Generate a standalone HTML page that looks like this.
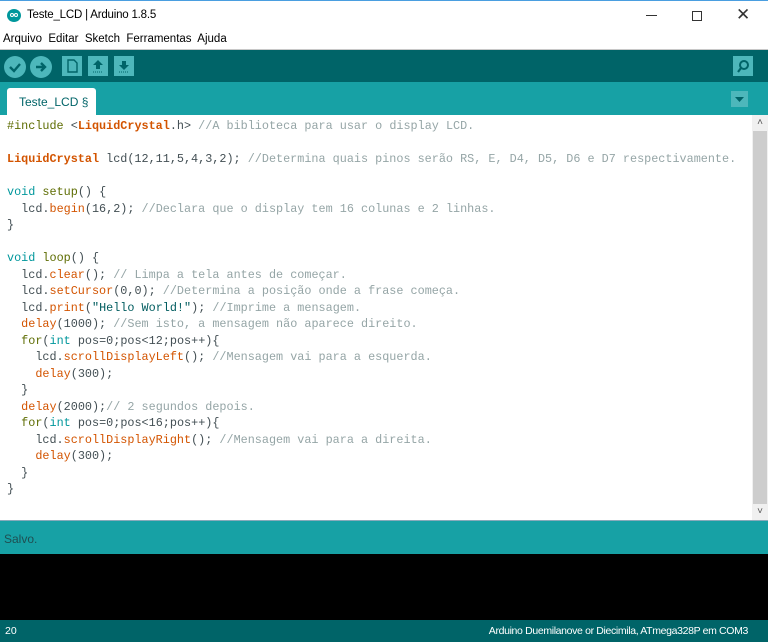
<!DOCTYPE html>
<html><head><meta charset="utf-8"><style>
*{margin:0;padding:0;box-sizing:border-box}
body{width:768px;height:642px;overflow:hidden;background:#fff;font-family:"Liberation Sans",sans-serif;position:relative}
.abs{position:absolute}
#title{top:0;left:0;width:768px;height:30px;background:#fff;border-top:1px solid #4a9ee0}
#menu{top:30px;left:0;width:768px;height:20px;font-size:11.5px;color:#000;border-bottom:1px solid #c8c8c8}
#tool{top:50px;left:0;width:768px;height:32px;background:#006468}
#tabs{top:82px;left:0;width:768px;height:33px;background:#17a1a5}
.btn{position:absolute;top:6px;width:22px;height:22px;border-radius:50%;background:#4db7bb}
.sq{position:absolute;top:6px;width:20px;height:20px;background:#4db7bb}
pre{position:absolute;left:7px;top:118px;font-family:"Liberation Mono",monospace;font-size:11.8px;line-height:16.5px;color:#434f54}
.k{color:#d35400}.kb{color:#d35400;font-weight:bold}.t{color:#00979c}.g{color:#5e6d03}.c{color:#95a5a6}.s{color:#005c5f}
#status{top:520px;left:0;width:768px;height:34px;background:#17a1a5;color:#1f4f52;font-size:12px;border-top:1px solid #8ab}
#console{top:554px;left:0;width:768px;height:66px;background:#000}
#bottom{top:620px;left:0;width:768px;height:22px;background:#006468;color:#fff;font-size:10.5px}
</style></head><body>
<div id="title" class="abs">
 <div class="abs" style="left:7px;top:8px;width:14px;height:13px;border-radius:50%;background:#00979c"></div>
 <div class="abs" style="left:10px;top:12px;width:4px;height:4px;border:1px solid #fff;border-radius:50%"></div>
 <div class="abs" style="left:14px;top:12px;width:4px;height:4px;border:1px solid #fff;border-radius:50%"></div>
 <div class="abs" style="left:27px;top:8px;font-size:11.5px;letter-spacing:-0.2px;color:#000">Teste_LCD | Arduino 1.8.5</div>
 <div class="abs" style="left:646px;top:14px;width:11px;height:1px;background:#333"></div>
 <div class="abs" style="left:692px;top:10px;width:10px;height:10px;border:1px solid #333"></div>
 <div class="abs" style="left:736px;top:4px;font-size:17px;color:#333;font-weight:300">✕</div>
</div>
<div id="menu" class="abs"><span class="abs" style="left:3px;top:3px">Arquivo&nbsp; Editar&nbsp; Sketch&nbsp; Ferramentas&nbsp; Ajuda</span></div>
<div id="tool" class="abs">
 <div class="btn" style="left:4px"><svg width="22" height="22"><path d="M6 11l4 4 6-7" stroke="#006468" stroke-width="2.4" fill="none"/></svg></div>
 <div class="btn" style="left:30px"><svg width="22" height="22"><path d="M6 11h9M11 7l4 4-4 4" stroke="#006468" stroke-width="2.4" fill="none"/></svg></div>
 <div class="sq" style="left:62px"><svg width="20" height="20"><path d="M6 4h6l3 3v9H6z" fill="none" stroke="#006468" stroke-width="1.4"/></svg></div>
 <div class="sq" style="left:88px"><svg width="20" height="20"><path d="M10 4l-5 5h3v4h4V9h3z" fill="#006468"/><path d="M5 16h10" stroke="#006468" stroke-dasharray="1 1"/></svg></div>
 <div class="sq" style="left:114px"><svg width="20" height="20"><path d="M10 14l-5-5h3V5h4v4h3z" fill="#006468"/><path d="M5 16h10" stroke="#006468" stroke-dasharray="1 1"/></svg></div>
 <div class="sq" style="left:733px;top:6px"><svg width="20" height="20"><circle cx="11" cy="9" r="4" fill="none" stroke="#006468" stroke-width="2"/><path d="M8 12l-3 4" stroke="#006468" stroke-width="2.2"/></svg></div>
</div>
<div id="tabs" class="abs">
 <div class="abs" style="left:7px;top:6px;width:89px;height:27px;background:#fff;border-radius:3px 3px 0 0;font-size:12px;color:#006468;padding:7px 0 0 12px">Teste_LCD §</div>
 <div class="abs" style="left:731px;top:9px;width:17px;height:16px;background:#4db7bb"><svg width="17" height="16"><path d="M4 6h9l-4.5 5z" fill="#006468"/></svg></div>
</div>
<pre><span class="g">#include</span> &lt;<span class="kb">LiquidCrystal</span>.h&gt; <span class="c">//A biblioteca para usar o display LCD.</span>

<span class="kb">LiquidCrystal</span> lcd(12,11,5,4,3,2); <span class="c">//Determina quais pinos serão RS, E, D4, D5, D6 e D7 respectivamente.</span>

<span class="t">void</span> <span class="g">setup</span>() {
  lcd.<span class="k">begin</span>(16,2); <span class="c">//Declara que o display tem 16 colunas e 2 linhas.</span>
}

<span class="t">void</span> <span class="g">loop</span>() {
  lcd.<span class="k">clear</span>(); <span class="c">// Limpa a tela antes de começar.</span>
  lcd.<span class="k">setCursor</span>(0,0); <span class="c">//Determina a posição onde a frase começa.</span>
  lcd.<span class="k">print</span>(<span class="s">"Hello World!"</span>); <span class="c">//Imprime a mensagem.</span>
  <span class="k">delay</span>(1000); <span class="c">//Sem isto, a mensagem não aparece direito.</span>
  <span class="g">for</span>(<span class="t">int</span> pos=0;pos&lt;12;pos++){
    lcd.<span class="k">scrollDisplayLeft</span>(); <span class="c">//Mensagem vai para a esquerda.</span>
    <span class="k">delay</span>(300);
  }
  <span class="k">delay</span>(2000);<span class="c">// 2 segundos depois.</span>
  <span class="g">for</span>(<span class="t">int</span> pos=0;pos&lt;16;pos++){
    lcd.<span class="k">scrollDisplayRight</span>(); <span class="c">//Mensagem vai para a direita.</span>
    <span class="k">delay</span>(300);
  }
}</pre>
<div class="abs" style="left:752px;top:115px;width:16px;height:405px;background:#f0f0f0">
 <div class="abs" style="left:0;top:0;width:16px;height:16px;font-size:10px;color:#555;text-align:center;line-height:16px">˄</div>
 <div class="abs" style="left:1px;top:16px;width:14px;height:373px;background:#cdcdcd"></div>
 <div class="abs" style="left:0;bottom:0;width:16px;height:16px;font-size:10px;color:#555;text-align:center;line-height:16px">˅</div>
</div>
<div id="status" class="abs"><span class="abs" style="left:4px;top:11px">Salvo.</span></div>
<div id="console" class="abs"></div>
<div id="bottom" class="abs"><span class="abs" style="left:5px;top:5px">20</span><span class="abs" style="right:20px;top:5px;letter-spacing:-0.35px">Arduino Duemilanove or Diecimila, ATmega328P em COM3</span></div>
</body></html>
